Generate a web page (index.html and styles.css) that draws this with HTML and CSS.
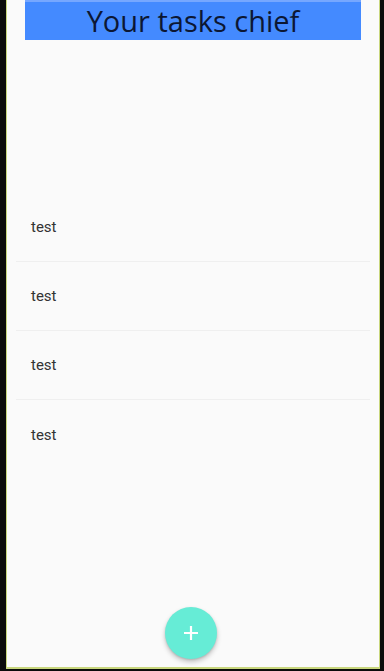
FILE: index.html
```html
<!DOCTYPE html>
<html>
<head>
<meta charset="utf-8">
<link rel="stylesheet" href="styles.css">
</head>
<body>
<div class="screen">
  <header class="header">Your tasks chief</header>
  <ul class="list">
    <li class="row">test</li>
    <li class="row">test</li>
    <li class="row">test</li>
    <li class="row">test</li>
  </ul>
  <button class="fab" aria-label="add">
    <svg width="18" height="18" viewBox="0 0 18 18"><path d="M9 2v14M2 9h14" stroke="#fff" stroke-width="2.2" fill="none"/></svg>
  </button>
</div>
</body>
</html>
```
FILE: styles.css
```css
html, body {
  margin: 0;
  padding: 0;
  background: #0b0b0b;
  height: 671px;
  overflow: hidden;
}
.screen {
  box-sizing: border-box;
  margin-left: 6px;
  width: 374px;
  height: 669px;
  background: #fafafa;
  border-left: 1px solid #c9d77e;
  border-right: 1px solid #c9d77e;
  border-bottom: 2px solid #c9d77e;
  display: flex;
  flex-direction: column;
}
.header {
  box-sizing: border-box;
  margin: 0 18px;
  height: 40px;
  background: #448aff;
  border-top: 2px solid #76a7ff;
  color: #0c1733;
  font-family: "Open Sans", sans-serif;
  font-size: 29px;
  line-height: 38px;
  text-align: center;
}
.list {
  list-style: none;
  margin: 153px 9px 0;
  padding: 0;
  flex: 1;
}
.row {
  height: 69px;
  box-sizing: border-box;
  display: flex;
  align-items: center;
  padding-left: 15px;
  font-family: Roboto, sans-serif;
  font-size: 15px;
  color: #333;
  border-bottom: 1px solid #efefef;
}
.row:last-child {
  border-bottom: none;
}
.fab {
  align-self: flex-start;
  margin: 0 0 8px 158px;
  width: 52px;
  height: 52px;
  border-radius: 50%;
  border: none;
  padding: 0;
  background: #66ecd6;
  box-shadow: 0 3px 5px rgba(0,0,0,0.22), 0 1px 2px rgba(0,0,0,0.12);
  display: flex;
  align-items: center;
  justify-content: center;
}
```
